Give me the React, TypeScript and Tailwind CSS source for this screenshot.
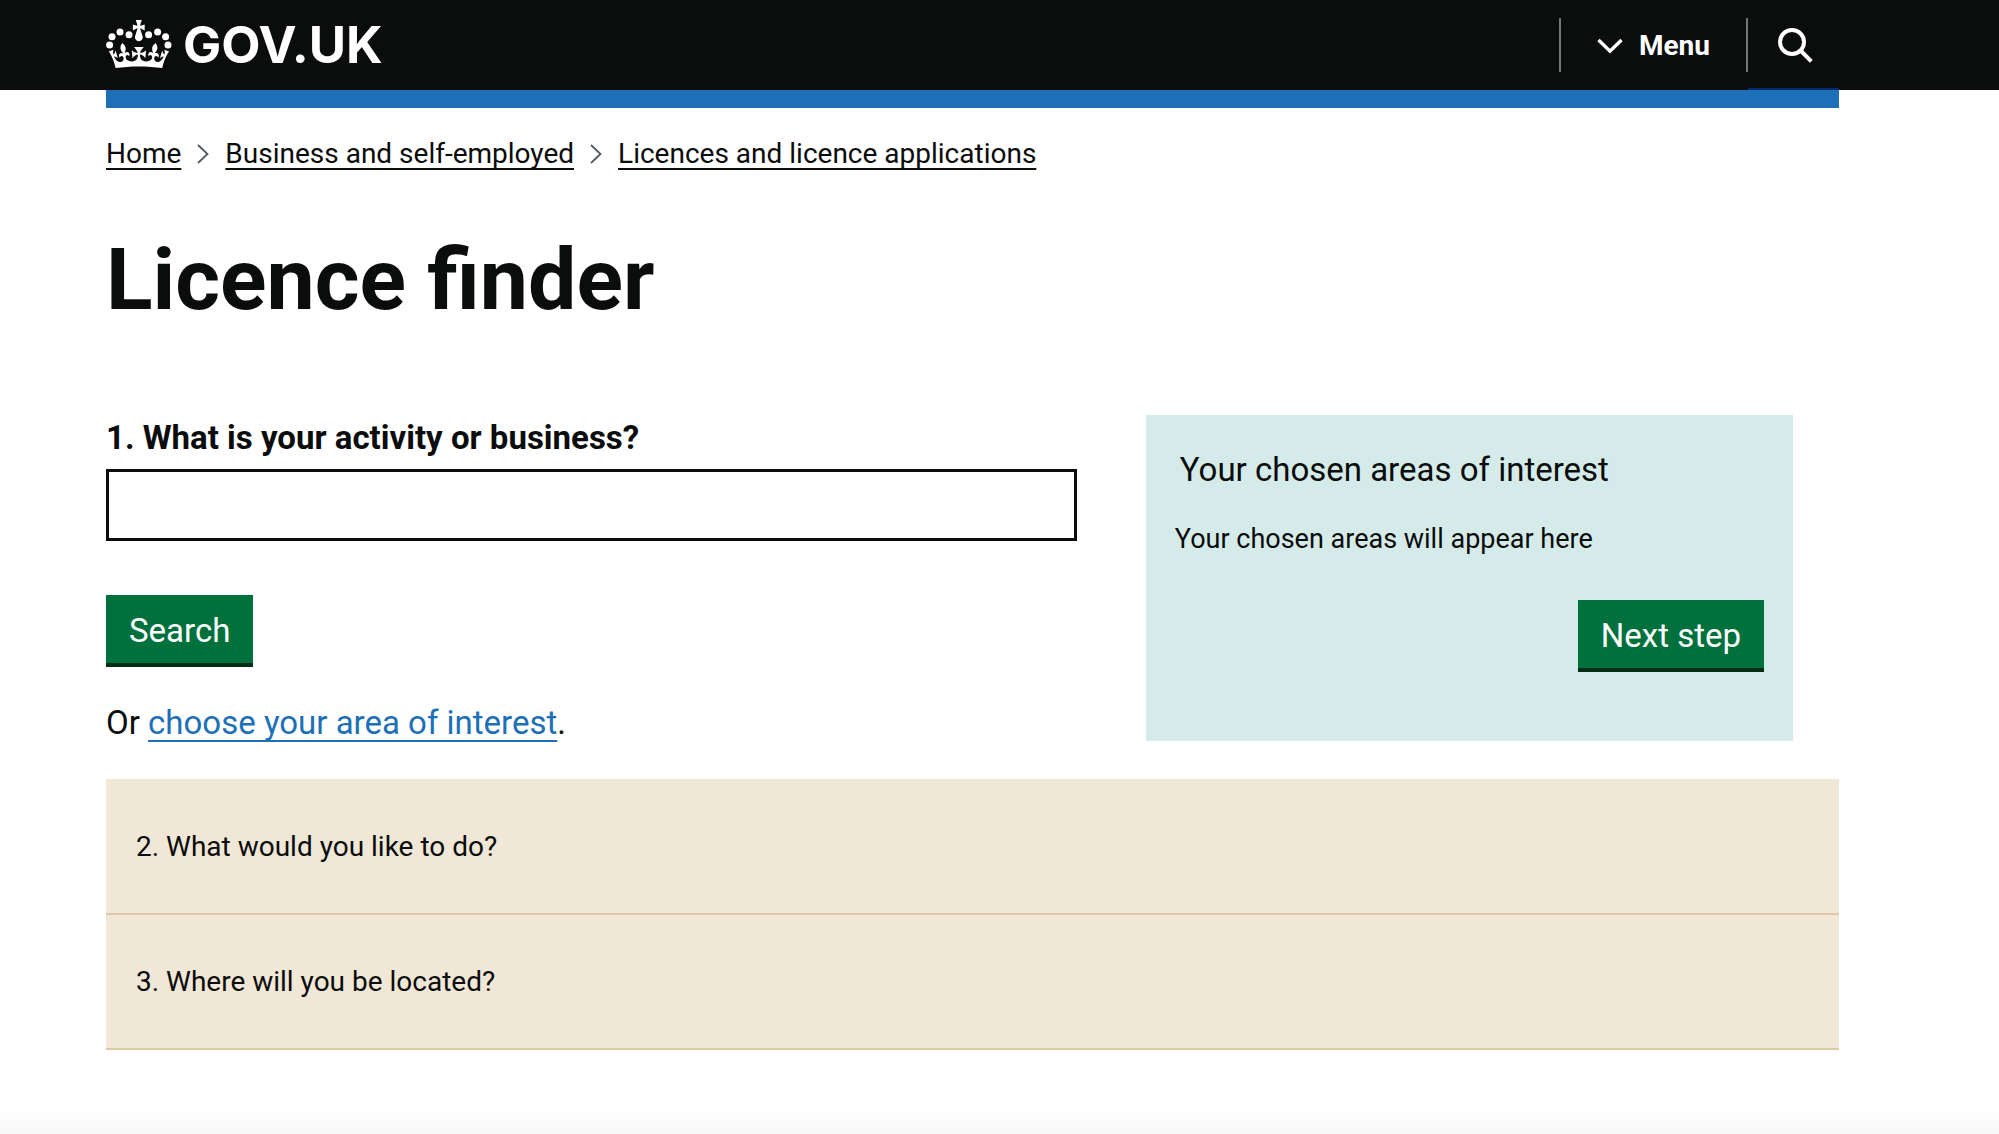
import type { ReactNode } from 'react';

function Crown() {
  const beads = [
    [23, 14.7],
    [14, 12],
    [6, 16.7],
    [3.6, 25],
  ];
  return (
    <svg viewBox="0 0 66 48" fill="currentColor" aria-hidden="true" className="h-12 w-[66px] shrink-0">
      {beads.map(([x, y]) => (
        <g key={x}>
          <circle cx={x} cy={y} r="3.5" />
          <circle cx={65.6 - x} cy={y} r="3.5" />
        </g>
      ))}
      <path
        transform="translate(4.3 0) scale(0.9)"
        d="M33.1 9.8c.2-.1.3-.3.5-.5l4.6 2.4v-6.8l-4.6 1.5c-.1-.2-.3-.3-.5-.5l1.9-5.9h-6.7l1.9 5.9c-.2.1-.3.3-.5.5l-4.6-1.5v6.8l4.6-2.4c.1.2.3.3.5.5l-2.6 8c-.9 2.8 1.2 5.7 4.1 5.7 3 0 5.1-2.9 4.1-5.7l-2.6-8Z"
      />
      <path
        transform="translate(2.7 -9) scale(0.95)"
        d="M37 37.9s-3.4 3.8-4.1 6.1c2.2 0 4.2-.5 6.4-2.8l-.7 8.5c-2-2.8-4.4-4.1-5.7-3.8.1 3.1.5 6.7 5.8 7.2 3.7.3 6.7-1.5 7-3.8.4-2.6-2-4.3-3.7-1.6-1.4-4.5 2.4-6.1 4.9-3.2-1.9-4.5-1.8-7.7 2.4-10.9 3 4 2.6 7.3-1.2 11.1 2.4-1.3 6.2 0 4 4.6-1.2-2.8-3.7-2.2-4.2.2-.3 1.7.7 3.7 3 4.2 1.9.3 4.7-.9 7-5.9-1.3 0-2.4.7-3.9 1.7l2.4-8c.6 2.3 1.4 3.7 2.2 4.5.6-1.6.5-2.8 0-5.3l5 1.8c-2.6 3.6-5.2 8.7-7.3 17.5-7.4-1.1-15.7-1.7-24.5-1.7-8.8 0-17.1.6-24.5 1.7-2.1-8.9-4.7-13.9-7.3-17.5l5-1.8c-.5 2.5-.6 3.7 0 5.3.8-.8 1.6-2.3 2.2-4.5l2.4 8c-1.5-1-2.6-1.7-3.9-1.7 2.3 5 5.2 6.2 7 5.9 2.3-.4 3.3-2.4 3-4.2-.5-2.4-3-3.1-4.2-.2-2.2-4.6 1.6-6 4-4.6-3.7-3.7-4.2-7.1-1.2-11.1 4.2 3.2 4.3 6.4 2.4 10.9 2.5-2.8 6.3-1.3 4.9 3.2-1.8-2.7-4.1-1-3.7 1.6.3 2.3 3.3 4.1 7 3.8 5.4-.5 5.7-4.2 5.8-7.2-1.3-.2-3.7 1-5.7 3.8l-.7-8.5c2.2 2.3 4.2 2.7 6.4 2.8-.7-2.3-4.1-6.1-4.1-6.1h10.6Z"
      />
    </svg>
  );
}

function Header() {
  return (
    <header className="bg-[#0b0c0c] pr-40 pl-[106px] text-white">
      <div className="flex h-[90px] items-center">
        <a href="#" className="flex items-center gap-[11px] pb-[3px]">
          <Crown />
          <span className="pt-0.5 font-['Inter',sans-serif] text-[51px] leading-[60px] font-bold">GOV.UK</span>
        </a>
        <nav aria-label="Site" className="ml-auto flex h-full items-center">
          <div className="h-[54px] w-0.5 bg-[#6f777b]" />
          <button type="button" className="flex h-full items-center gap-4 px-9 pt-0.5 text-[28px] leading-9 font-bold">
            <svg viewBox="0 0 26 16" fill="none" stroke="currentColor" strokeWidth="3.4" aria-hidden="true" className="h-4 w-[26px]">
              <path d="M1.5 2 13 13.2 24.5 2" />
            </svg>
            Menu
          </button>
          <div className="h-[54px] w-0.5 bg-[#6f777b]" />
          <button
            type="button"
            aria-label="Search GOV.UK"
            className="flex h-full w-[91px] items-center border-b-2 border-[#00296b] pt-0.5 pl-[30px]"
          >
            <svg viewBox="0 0 35 35" fill="none" stroke="currentColor" strokeWidth="4" aria-hidden="true" className="size-[35px]">
              <circle cx="14" cy="14" r="12" />
              <path d="m22.5 22.5 10.8 10.8" />
            </svg>
          </button>
        </nav>
      </div>
    </header>
  );
}

function Breadcrumbs() {
  const items = ['Home', 'Business and self-employed', 'Licences and licence applications'];
  return (
    <nav aria-label="Breadcrumb" className="pt-7">
      <ol className="flex items-center text-[28px] leading-9">
        {items.map((item, i) => (
          <li key={item} className="flex items-center">
            {i > 0 && (
              <svg viewBox="0 0 12 20" fill="none" stroke="#505a5f" strokeWidth="1.8" aria-hidden="true" className="mx-4 h-5 w-3">
                <path d="m1 1 9.5 9L1 19" />
              </svg>
            )}
            <a
              href="#"
              className="underline decoration-2 underline-offset-[5px] [text-decoration-skip-ink:none]"
            >
              {item}
            </a>
          </li>
        ))}
      </ol>
    </nav>
  );
}

function Button({ children }: { children: ReactNode }) {
  return (
    <button type="submit" className="h-[72px] border-b-4 border-[#002d18] bg-[#00703c] px-[23px] pt-1 text-[33px] leading-10 text-white">
      {children}
    </button>
  );
}

export default function App() {
  return (
    <div className="flex min-h-screen flex-col bg-white font-['Roboto',sans-serif] text-[#0b0c0c]">
      <Header />
      <div className="mr-40 ml-[106px]">
        <div className="h-[18px] bg-[#1d70b8]" />
        <Breadcrumbs />
        <main>
          <h1 className="mt-[60px] text-[86px] leading-24 font-bold">Licence finder</h1>

          <div className="mt-[87px] grid grid-cols-[3fr_2fr] items-start gap-[69px] pr-[46px]">
            <form className="pt-[3px]" onSubmit={(e) => e.preventDefault()}>
              <label htmlFor="activity" className="block text-[33px] leading-10 font-bold">
                1. What is your activity or business?
              </label>
              <input
                id="activity"
                type="text"
                className="mt-[11px] mb-[54px] block h-[72px] w-full border-3 border-[#0b0c0c] px-2 text-[33px]"
              />
              <Button>Search</Button>
              <p className="mt-9 text-[33px] leading-10">
                Or{' '}
                <a
                  href="#"
                  className="text-[#1d70b8] underline decoration-2 underline-offset-[6px] [text-decoration-skip-ink:none]"
                >
                  choose your area of interest
                </a>
                .
              </p>
            </form>

            <form className="bg-[#d5ebe9] px-[29px] pt-[35px] pb-[69px]" onSubmit={(e) => e.preventDefault()}>
              <h2 className="pl-[5px] text-[33px] leading-10">Your chosen areas of interest</h2>
              <p className="mt-[31px] mb-[43px] text-[27px] leading-9">Your chosen areas will appear here</p>
              <div className="flex justify-end">
                <Button>Next step</Button>
              </div>
            </form>
          </div>

          <ol className="mt-9 bg-[#f0e7d6] text-[28px] leading-9">
            <li className="border-b-2 border-[#dfc8a6] px-[30px] pt-[50px] pb-12">2. What would you like to do?</li>
            <li className="border-b-2 border-[#dfc8a6] px-[30px] pt-[49px] pb-12">3. Where will you be located?</li>
          </ol>
        </main>
      </div>
      <div className="mt-auto h-7 bg-linear-to-b from-white to-[#f8f8f8]" />
    </div>
  );
}
